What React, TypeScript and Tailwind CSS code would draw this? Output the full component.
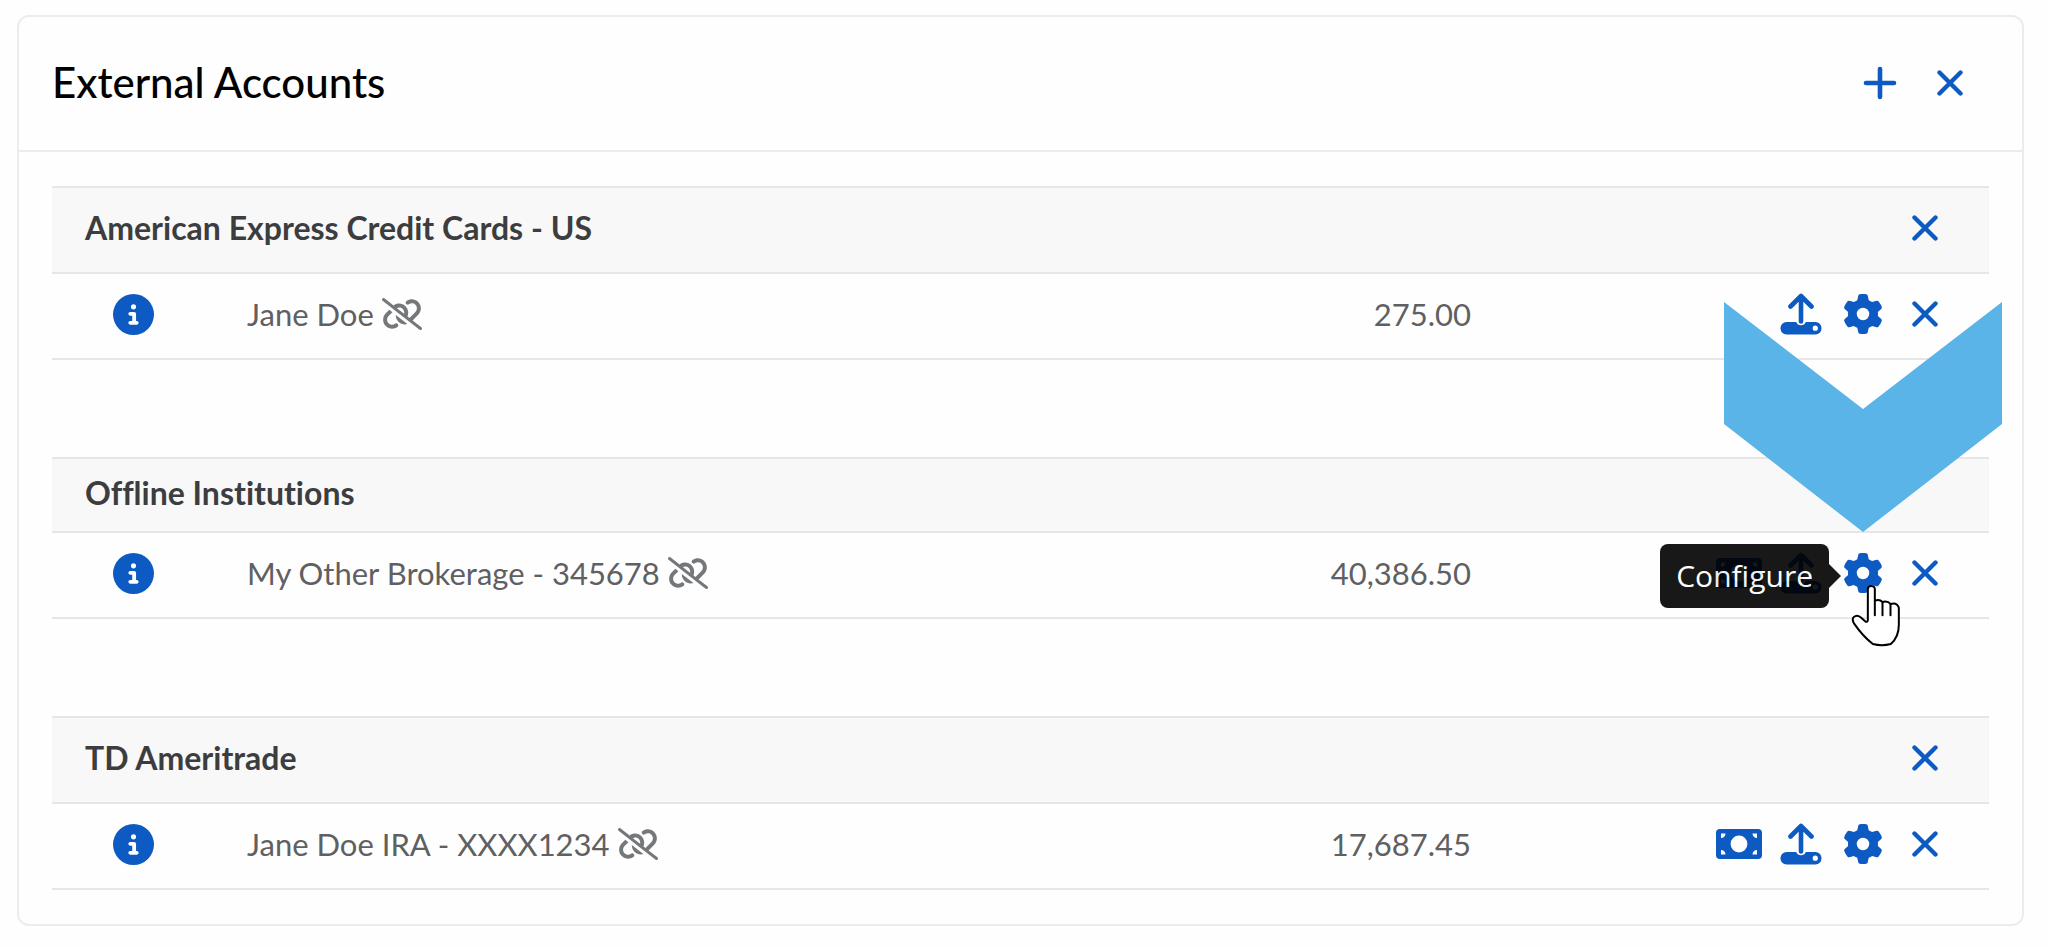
import type { ReactNode } from "react";
import { FaCircleInfo, FaGear, FaLinkSlash } from "react-icons/fa6";

type ActionName = "cash" | "upload" | "configure" | "remove";

type Institution = {
  name: string;
  removable: boolean;
  account: string;
  balance: string;
  actions: ActionName[];
  highlighted?: boolean;
};

const institutions: Institution[] = [
  {
    name: "American Express Credit Cards - US",
    removable: true,
    account: "Jane Doe",
    balance: "275.00",
    actions: ["upload", "configure", "remove"],
  },
  {
    name: "Offline Institutions",
    removable: false,
    account: "My Other Brokerage - 345678",
    balance: "40,386.50",
    actions: ["cash", "upload", "configure", "remove"],
    highlighted: true,
  },
  {
    name: "TD Ameritrade",
    removable: true,
    account: "Jane Doe IRA - XXXX1234",
    balance: "17,687.45",
    actions: ["cash", "upload", "configure", "remove"],
  },
];

function CloseIcon() {
  return (
    <svg viewBox="0 0 26 26" className="size-[26px]" fill="none" stroke="currentColor" strokeWidth="4.4" strokeLinecap="round">
      <path d="M2.5 2.5 23.5 23.5M23.5 2.5 2.5 23.5" />
    </svg>
  );
}

function PlusIcon() {
  return (
    <svg viewBox="0 0 34 34" className="size-[34px]" fill="none" stroke="currentColor" strokeWidth="4.6" strokeLinecap="round">
      <path d="M17 3V31M3 17H31" />
    </svg>
  );
}

function CashIcon() {
  return (
    <svg viewBox="0 0 46 30" className="h-[30px] w-[46px]" fill="currentColor" fillRule="evenodd">
      <path d="M4 0H42A4 4 0 0 1 46 4V26A4 4 0 0 1 42 30H4A4 4 0 0 1 0 26V4A4 4 0 0 1 4 0ZM23 6.6A8.4 8.4 0 1 0 23 23.4A8.4 8.4 0 1 0 23 6.6ZM5 4.5V9A4.5 4.5 0 0 0 9.5 4.5ZM41 4.5H36.5A4.5 4.5 0 0 0 41 9ZM5 25.5H9.5A4.5 4.5 0 0 0 5 21ZM41 25.5V21A4.5 4.5 0 0 0 36.5 25.5Z" />
    </svg>
  );
}

function UploadIcon() {
  return (
    <svg viewBox="0 0 42 42" className="size-[42px]">
      <path
        d="M6.5 29H16.2A5.2 5.2 0 0 0 25.8 29H35.5A6 6 0 0 1 41.5 35V35.5A6 6 0 0 1 35.5 41.5H6.5A6 6 0 0 1 .5 35.5V35A6 6 0 0 1 6.5 29ZM35.3 32.6A2.6 2.6 0 1 0 35.3 37.8A2.6 2.6 0 1 0 35.3 32.6Z"
        fill="currentColor"
        fillRule="evenodd"
      />
      <path d="M21 28.5V3M10.5 13.5 21 3 31.5 13.5" fill="none" stroke="currentColor" strokeWidth="4.6" strokeLinecap="round" strokeLinejoin="round" />
    </svg>
  );
}

function Pointer() {
  return (
    <svg
      viewBox="30 100 152 192"
      className="absolute top-9 left-[18px] z-20 h-[64px] w-[51px]"
      fill="white"
      stroke="black"
      strokeWidth="6"
      strokeLinejoin="round"
      strokeLinecap="round"
    >
      <path d="M83 210V119Q83 109 93 109Q104 109 104 119V153Q118 148 127 157Q143 153 151 163Q170 157 176 174V226Q176 262 152 283Q125 290 98 283Q68 260 42 222Q34 208 41 202Q52 193 64 205L75 215Q83 219 83 210Z" />
      <path d="M104 153V197M127 157V197M151 163V197" fill="none" />
    </svg>
  );
}

function Callout() {
  return (
    <>
      <svg viewBox="0 0 278 230" className="absolute bottom-[67px] left-1/2 z-10 h-[230px] w-[278px] -translate-x-1/2">
        <path d="M0 0 139 107 278 0V122L139 230 0 122Z" fill="#5bb4e7" />
      </svg>
      <div role="tooltip" className="absolute -top-[3px] right-[53px] z-10 flex items-center opacity-90">
        <span className="rounded-lg bg-black px-4 py-3 font-['Open_Sans',sans-serif] text-[30px] leading-10 text-white">Configure</span>
        <span className="border-y-[12px] border-l-[12px] border-y-transparent border-l-black" />
      </div>
      <Pointer />
    </>
  );
}

function IconButton({ label, children }: { label: string; children: ReactNode }) {
  return (
    <button type="button" aria-label={label} className="flex h-[52px] w-[62px] cursor-pointer items-center justify-center text-[#0c5ac2]">
      {children}
    </button>
  );
}

const actionIcons: Record<ActionName, { label: string; icon: ReactNode }> = {
  cash: { label: "Cash", icon: <CashIcon /> },
  upload: { label: "Upload", icon: <UploadIcon /> },
  configure: { label: "Configure", icon: <FaGear className="size-10" /> },
  remove: { label: "Remove account", icon: <CloseIcon /> },
};

function InstitutionTable({ item }: { item: Institution }) {
  return (
    <table className="w-full table-fixed border-collapse text-[31px] leading-10 text-[#5f6062]">
      <colgroup>
        <col className="w-[195px]" />
        <col />
        <col className="w-[200px]" />
        <col className="w-[518px]" />
      </colgroup>
      <thead>
        <tr className="border-y-2 border-[#e6e6e6] bg-[#f8f8f8] text-[32px] text-[#3c3d3f]">
          <th colSpan={3} scope="colgroup" className="pt-3.5 pb-[18px] pl-[33px] text-left font-bold">
            {item.name}
          </th>
          <td className="pt-3.5 pr-[33px] pb-[18px]">
            {item.removable && (
              <div className="flex justify-end">
                <IconButton label={`Remove ${item.name}`}>
                  <CloseIcon />
                </IconButton>
              </div>
            )}
          </td>
        </tr>
      </thead>
      <tbody>
        <tr className="border-b-2 border-[#e6e6e6]">
          <td className="pt-3.5 pb-[18px] pl-[50px]">
            <IconButton label="Account details">
              <FaCircleInfo className="size-[41px]" />
            </IconButton>
          </td>
          <td className="pt-3.5 pb-[18px]">
            <div className="flex items-center gap-2">
              <span>{item.account}</span>
              <FaLinkSlash className="size-10 text-[#75787b]" />
            </div>
          </td>
          <td className="pt-3.5 pb-[18px] text-right">{item.balance}</td>
          <td className="pt-3.5 pr-[33px] pb-[18px]">
            <div className="flex justify-end">
              {item.actions.map((name) => (
                <div key={name} className="relative">
                  <IconButton label={actionIcons[name].label}>{actionIcons[name].icon}</IconButton>
                  {item.highlighted && name === "configure" && <Callout />}
                </div>
              ))}
            </div>
          </td>
        </tr>
      </tbody>
    </table>
  );
}

export default function App() {
  return (
    <main className="min-h-screen bg-[#fefefe] pt-[15px] pr-6 pb-6 pl-[17px] font-['Lato',sans-serif] [font-variant-ligatures:none]">
      <section className="rounded-xl border-2 border-[#ececec]">
        <header className="flex items-center justify-between border-b-2 border-[#ececec] pt-[39px] pr-[41px] pb-[41px] pl-[33px]">
          <h1 className="text-[42px] leading-[53px] font-medium text-black">External Accounts</h1>
          <div className="flex gap-2">
            <IconButton label="Add account">
              <PlusIcon />
            </IconButton>
            <IconButton label="Close">
              <CloseIcon />
            </IconButton>
          </div>
        </header>

        <div className="flex flex-col gap-[97px] px-[33px] py-[34px]">
          {institutions.map((item) => (
            <InstitutionTable key={item.name} item={item} />
          ))}
        </div>
      </section>
    </main>
  );
}
